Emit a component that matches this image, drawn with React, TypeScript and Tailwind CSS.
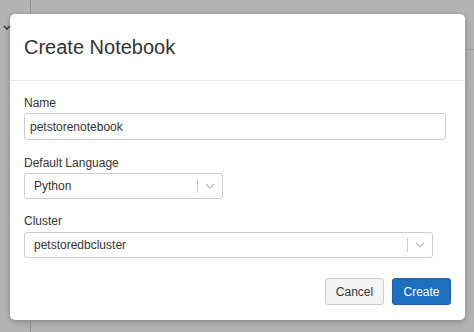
import React from "react";

function Chevron({ className }: { className?: string }) {
  return (
    <svg width="10" height="6" viewBox="0 0 10 6" className={className} fill="none">
      <path d="M1 1l4 4 4-4" stroke="currentColor" strokeWidth="1.3" />
    </svg>
  );
}

function Select({ value, width }: { value: string; width: string }) {
  return (
    <div className={`${width} h-[26px] border border-[#cccccc] rounded-[3px] bg-white flex items-center`}>
      <span className="flex-1 pl-[9px] text-[12px] text-[#333333]">{value}</span>
      <span className="w-px h-[14px] bg-[#cccccc]" />
      <span className="w-[24px] flex items-center justify-center text-[#bbbbbb]">
        <Chevron />
      </span>
    </div>
  );
}

export default function App() {
  return (
    <div
      className="relative w-[474px] h-[332px] overflow-hidden bg-[#b3b3b3] pt-[14px] pl-[10px]"
      style={{ fontFamily: '"Liberation Sans", Arial, sans-serif' }}
    >
      <div className="absolute left-[30px] top-0 w-px h-[14px] bg-[#8f8f8f]" />
      <div className="absolute left-[30px] top-[320px] w-px h-[12px] bg-[#8f8f8f]" />
      <div className="absolute left-[465px] top-[49px] w-[9px] h-px bg-[#9a9a9a]" />
      <svg className="absolute left-[3px] top-[25px]" width="8" height="6" viewBox="0 0 8 6" fill="none">
        <path d="M1 1l3 3 3-3" stroke="#3a3a3a" strokeWidth="1.6" />
      </svg>

      <div className="w-[455px] h-[306px] bg-white rounded-[5px] shadow-[0_2px_6px_rgba(0,0,0,0.25)] flex flex-col">
        <div className="h-[67px] flex items-center pl-[14px] border-b border-[#e9e9e9]">
          <span className="text-[20px] leading-[23px] text-[#333333]">Create Notebook</span>
        </div>
        <div className="px-[14px] pt-[15px] flex flex-col text-[#333333]">
          <label className="text-[12px] leading-[14px] mb-[3px]">Name</label>
          <div className="w-[422px] h-[27px] border border-[#cccccc] rounded-[3px] flex items-center pl-[5px] text-[12px]">
            petstorenotebook
          </div>
          <label className="text-[12px] leading-[14px] mt-[16px] mb-[3px]">Default Language</label>
          <Select value="Python" width="w-[199px]" />
          <label className="text-[12px] leading-[14px] mt-[15px] mb-[4px]">Cluster</label>
          <Select value="petstoredbcluster" width="w-[409px]" />
          <div className="flex justify-end gap-[8px] mt-[20px]">
            <button className="w-[59px] h-[27px] rounded-[3px] border border-[#cccccc] bg-[#f4f4f4] text-[12px] text-[#333333]">
              Cancel
            </button>
            <button className="w-[59px] h-[27px] rounded-[3px] border border-[#1a64ae] bg-[#1e6fbf] text-[12px] text-white">
              Create
            </button>
          </div>
        </div>
      </div>
    </div>
  );
}
